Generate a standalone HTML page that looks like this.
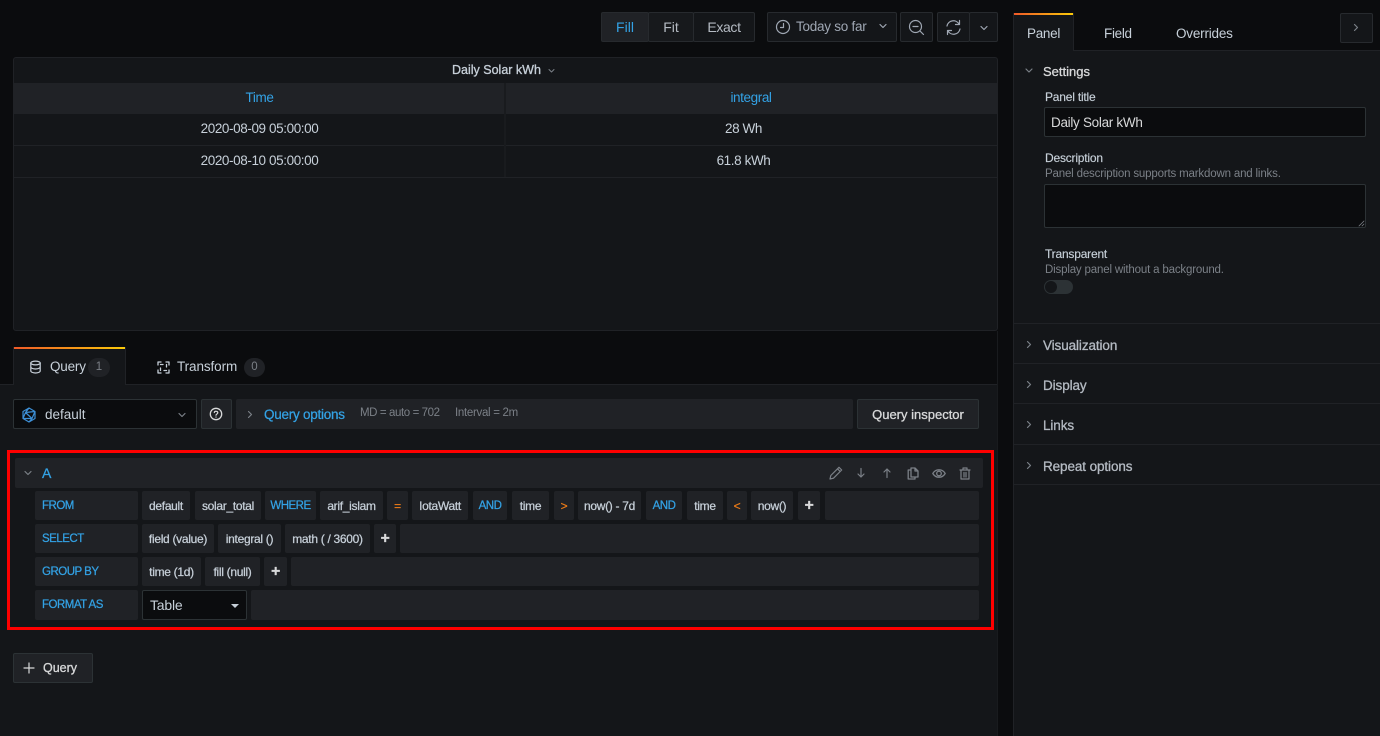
<!DOCTYPE html>
<html><head><meta charset="utf-8"><style>
html,body{margin:0;padding:0;width:1380px;height:736px;overflow:hidden;background:#0b0c0e}
body{position:relative;font-family:"Liberation Sans",sans-serif;color:#c7d0d9;font-size:14px}
.a{position:absolute;box-sizing:border-box;white-space:nowrap}
.t{font-size:13.5px;letter-spacing:-.4px}
.c{position:absolute;box-sizing:border-box;white-space:nowrap;text-align:center;background:#202226;border-radius:2px;color:#c7d0d9;font-size:12px;letter-spacing:-.3px;height:29px;line-height:30px;-webkit-text-stroke:.25px}
.k{color:#33a2e5;text-align:left;padding-left:7px;font-size:11.5px;letter-spacing:-.5px;line-height:31px}
.b{font-size:11.5px;letter-spacing:-.5px;line-height:31px}
.btn{position:absolute;box-sizing:border-box;background:#141619;border:1px solid #272a2e;height:30px;top:12px;border-radius:2px;text-align:center;line-height:28px;color:#9fa7b3}
svg{position:absolute;fill:none;stroke:#9fa7b3;stroke-width:1.5;stroke-linecap:round;stroke-linejoin:round}
.grad{position:absolute;height:2px;background:linear-gradient(90deg,#f05a28,#fbca0a)}
.sec{position:absolute;left:1014px;width:366px;height:40px;border-bottom:1px solid #202226;color:#b4bac2;font-size:13.5px;letter-spacing:-.1px;line-height:43px;padding-left:29px;box-sizing:border-box;-webkit-text-stroke:.3px}
.lab{position:absolute;font-size:12px;color:#c7d0d9;letter-spacing:-.2px;-webkit-text-stroke:.15px}
.hint{position:absolute;font-size:11.5px;letter-spacing:-.17px;color:#7b8087}
</style></head><body>

<!-- toolbar -->
<div class="btn" style="left:601px;width:48px;background:#202226;color:#33a2e5;line-height:29px">Fill</div>
<div class="btn" style="left:648px;width:46px;background:#17191c;color:#b4bac2;line-height:29px">Fit</div>
<div class="btn" style="left:693px;width:62px;color:#b4bac2;letter-spacing:-.35px;line-height:29px">Exact</div>
<div class="btn" style="left:767px;width:130px;text-align:left;padding-left:28px;font-size:13.5px;letter-spacing:-.25px;line-height:27px">Today so far</div>
<svg style="left:775px;top:19px" width="16" height="16" viewBox="0 0 16 16"><circle cx="8" cy="8" r="6.5" stroke-width="1.2"/><path d="M8.5 4.5V8.5H5.5" stroke-width="1.2"/></svg>
<svg style="left:878px;top:22px" width="10" height="8" viewBox="0 0 10 8"><path d="M2 2.5L5 5.5L8 2.5" stroke-width="1.2"/></svg>
<div class="btn" style="left:900px;width:33px"></div>
<svg style="left:908px;top:19px" width="17" height="17" viewBox="0 0 17 17"><circle cx="7.5" cy="7.5" r="6" stroke-width="1.2"/><path d="M5 7.5H10M12 12L15.5 15.5" stroke-width="1.2"/></svg>
<div class="btn" style="left:937px;width:33px"></div>
<svg style="left:945px;top:19px" width="17" height="17" viewBox="0 0 17 17"><path d="M2 7A6.5 6.5 0 0 1 14 5M15 10A6.5 6.5 0 0 1 3 12M14.5 1.5V5.5H10.5M2.5 15.5V11.5H6.5" stroke-width="1.2"/></svg>
<div class="btn" style="left:969px;width:29px"></div>
<svg style="left:979px;top:24px" width="10" height="8" viewBox="0 0 10 8"><path d="M2 2.5L5 5.5L8 2.5" stroke-width="1.2"/></svg>

<!-- panel -->
<div class="a" style="left:13px;top:57px;width:985px;height:274px;background:#141619;border:1px solid #202226;border-radius:3px"></div>
<div class="a" style="left:452px;top:63px;font-size:12.5px;color:#c7d0d9;line-height:15px;letter-spacing:0;-webkit-text-stroke:.3px">Daily Solar kWh</div>
<svg style="left:547px;top:67px" width="9" height="8" viewBox="0 0 9 8"><path d="M2 2.5L4.5 5L7 2.5" stroke-width="1" stroke="#7b8087"/></svg>
<div class="a" style="left:14px;top:83px;width:983px;height:31px;background:#202226"></div>
<div class="a t" style="left:14px;top:83px;width:491px;height:31px;line-height:30px;text-align:center;color:#33a2e5">Time</div>
<div class="a t" style="left:505px;top:83px;width:492px;height:31px;line-height:30px;text-align:center;color:#33a2e5">integral</div>
<div class="a t" style="left:14px;top:114px;width:491px;height:31px;line-height:30px;text-align:center">2020-08-09 05:00:00</div>
<div class="a t" style="left:505px;top:114px;width:477px;height:31px;line-height:30px;text-align:center">28 Wh</div>
<div class="a t" style="left:14px;top:146px;width:491px;height:31px;line-height:30px;text-align:center">2020-08-10 05:00:00</div>
<div class="a t" style="left:505px;top:146px;width:477px;height:31px;line-height:30px;text-align:center">61.8 kWh</div>
<div class="a" style="left:14px;top:145px;width:983px;height:1px;background:#202226"></div>
<div class="a" style="left:14px;top:177px;width:983px;height:1px;background:#202226"></div>
<div class="a" style="left:504px;top:83px;width:2px;height:94px;background:#191b1e"></div>

<!-- query area -->
<div class="a" style="left:0;top:384px;width:997px;height:352px;background:#141619;border-top:1px solid #202226"></div>
<div class="a" style="left:997px;top:331px;width:1px;height:405px;background:#191b1e"></div>
<div class="a" style="left:13px;top:347px;width:113px;height:38px;background:#141619;border-left:1px solid #202226;border-right:1px solid #202226"></div>
<div class="grad" style="left:14px;top:347px;width:111px"></div>
<svg style="left:29px;top:360px" width="13" height="14" viewBox="0 0 13 14"><ellipse cx="6.5" cy="3" rx="4.7" ry="1.9" stroke="#c7d0d9" stroke-width="1.2"/><path d="M1.8 3V11C1.8 12 4 13 6.5 13S11.2 12 11.2 11V3M1.8 7C1.8 8 4 9 6.5 9S11.2 8 11.2 7" stroke="#c7d0d9" stroke-width="1.2"/></svg>
<div class="a" style="left:50px;top:359px;line-height:16px;color:#c7d0d9;font-size:13.5px;letter-spacing:-.2px">Query</div>
<div class="a" style="left:88px;top:358px;width:22px;height:19px;border-radius:10px;background:#202226;text-align:center;line-height:19px;font-size:11.5px;color:#7b8087">1</div>
<svg style="left:157px;top:361px" width="13" height="13" viewBox="0 0 13 13"><path d="M1 4V1H4M9 1H12V4M12 9V12H9M4 12H1V9M3.5 3.5H6M9.5 3.5V6M9.5 9.5H7M3.5 9.5V7" stroke="#c7d0d9" stroke-width="1.3"/></svg>
<div class="a" style="left:177px;top:359px;line-height:16px;color:#c7d0d9;font-size:13.5px;letter-spacing:-.1px">Transform</div>
<div class="a" style="left:244px;top:358px;width:21px;height:19px;border-radius:10px;background:#202226;text-align:center;line-height:19px;font-size:11.5px;color:#7b8087">0</div>

<div class="a" style="left:13px;top:399px;width:184px;height:30px;background:#0b0c0e;border:1px solid #2c3235;border-radius:2px;padding-left:31px;line-height:29px;color:#c7d0d9;font-size:13.5px">default</div>
<svg style="left:21px;top:407px;" width="16" height="16" viewBox="0 0 16 16"><path d="M8 1L14 4.5V11.5L8 15L2 11.5V4.5ZM8 1L4.5 5.5L2 11.5L11 11.5L14 4.5L4.5 5.5L11 11.5L8 15" stroke="#3d8fd6" stroke-width="1.2"/></svg>
<svg style="left:177px;top:411px" width="10" height="8" viewBox="0 0 10 8"><path d="M2 2.5L5 5.5L8 2.5" stroke-width="1.2" stroke="#7b8087"/></svg>
<div class="a" style="left:201px;top:399px;width:31px;height:30px;background:#202226;border:1px solid #2c3235;border-radius:2px"></div>
<svg style="left:209px;top:407px" width="14" height="14" viewBox="0 0 14 14"><circle cx="7" cy="7" r="5.7" stroke="#d8d9da" stroke-width="1.3"/><path d="M5.3 5.5C5.5 3.8 8.8 3.9 8.8 5.7C8.8 7 7 6.9 7 8.2M7 10V10.1" stroke="#d8d9da" stroke-width="1.2"/></svg>
<div class="a" style="left:236px;top:399px;width:617px;height:30px;background:#202226;border-radius:2px"></div>
<svg style="left:246px;top:410px" width="8" height="9" viewBox="0 0 8 9"><path d="M2.5 1.5L5.5 4.5L2.5 7.5" stroke-width="1.2" stroke="#7b8087"/></svg>
<div class="a" style="left:264px;top:407px;line-height:16px;color:#33a2e5;font-size:13.5px;letter-spacing:-.25px;-webkit-text-stroke:.25px">Query options</div>
<div class="a" style="left:360px;top:406px;line-height:15px;font-size:11.5px;letter-spacing:-.4px;color:#7b8087">MD = auto = 702</div>
<div class="a" style="left:455px;top:406px;line-height:15px;font-size:11.5px;letter-spacing:-.3px;color:#7b8087">Interval = 2m</div>
<div class="a" style="left:857px;top:399px;width:122px;height:30px;background:#202226;border:1px solid #2c3235;border-radius:2px;text-align:center;line-height:29px;font-size:13px;color:#d8d9da;-webkit-text-stroke:.3px">Query inspector</div>

<!-- Query row -->
<div class="a" style="left:15px;top:458px;width:968px;height:30px;background:#202226;border-radius:2px"></div>
<svg style="left:23px;top:469px" width="10" height="8" viewBox="0 0 10 8"><path d="M2 2.5L5 5.5L8 2.5" stroke-width="1.2" stroke="#7b8087"/></svg>
<div class="a" style="left:42px;top:465px;font-size:14px;line-height:16px;color:#33a2e5;-webkit-text-stroke:.3px">A</div>
<svg style="left:829px;top:466px" width="14" height="14" viewBox="0 0 14 14"><path d="M1 13L1.8 9.5L10 1.3L12.7 4L4.5 12.2ZM8.5 2.8L11.2 5.5" stroke="#7b8087" stroke-width="1.2"/></svg>
<svg style="left:856px;top:467px" width="10" height="12" viewBox="0 0 10 12"><path d="M5 1.5V10M2 7L5 10L8 7" stroke="#7b8087" stroke-width="1.2"/></svg>
<svg style="left:882px;top:467px" width="10" height="12" viewBox="0 0 10 12"><path d="M5 10.5V2M2 5L5 2L8 5" stroke="#7b8087" stroke-width="1.2"/></svg>
<svg style="left:907px;top:467px" width="12" height="13" viewBox="0 0 12 13"><path d="M4 1H8L11 4V10H4ZM8 1V4H11M4 3H1.2V12H8V10" stroke="#7b8087" stroke-width="1.3"/></svg>
<svg style="left:932px;top:467px" width="14" height="13" viewBox="0 0 14 13"><path d="M.8 6.5C3.7 1.5 10.3 1.5 13.2 6.5C10.3 11.5 3.7 11.5 .8 6.5Z" stroke="#7b8087" stroke-width="1.3"/><circle cx="7" cy="6.5" r="2.3" stroke="#7b8087" stroke-width="1.3"/></svg>
<svg style="left:959px;top:467px" width="12" height="13" viewBox="0 0 12 13"><path d="M1 3H11M4 3V1H8V3M2 3V12H10V3M5 5.5V10M7 5.5V10" stroke="#7b8087" stroke-width="1.2"/></svg>

<!-- Row 1 -->
<div class="c k" style="left:35px;top:491px;width:103px">FROM</div>
<div class="c" style="left:142px;top:491px;width:48px">default</div>
<div class="c" style="left:195px;top:491px;width:66px">solar_total</div>
<div class="c b" style="left:265px;top:491px;width:51px;color:#33a2e5">WHERE</div>
<div class="c" style="left:320px;top:491px;width:63px">arif_islam</div>
<div class="c" style="left:387px;top:491px;width:21px;color:#eb7b18">=</div>
<div class="c" style="left:412px;top:491px;width:56px">IotaWatt</div>
<div class="c b" style="left:473px;top:491px;width:34px;color:#33a2e5">AND</div>
<div class="c" style="left:512px;top:491px;width:37px">time</div>
<div class="c" style="left:554px;top:491px;width:20px;color:#eb7b18">&gt;</div>
<div class="c" style="left:578px;top:491px;width:63px">now() - 7d</div>
<div class="c b" style="left:646px;top:491px;width:36px;color:#33a2e5">AND</div>
<div class="c" style="left:687px;top:491px;width:36px">time</div>
<div class="c" style="left:727px;top:491px;width:20px;color:#eb7b18">&lt;</div>
<div class="c" style="left:751px;top:491px;width:42px">now()</div>
<div class="c" style="left:798px;top:491px;width:22px;font-size:16px;font-weight:bold;line-height:29px;color:#d8d9da">+</div>
<div class="c" style="left:825px;top:491px;width:154px"></div>
<!-- Row 2 -->
<div class="c k" style="left:35px;top:524px;width:103px;line-height:30px">SELECT</div>
<div class="c" style="left:142px;top:524px;width:72px;line-height:31px">field (value)</div>
<div class="c" style="left:218px;top:524px;width:63px;line-height:31px">integral ()</div>
<div class="c" style="left:285px;top:524px;width:85px;line-height:31px">math ( / 3600)</div>
<div class="c" style="left:374px;top:524px;width:22px;font-size:16px;font-weight:bold;line-height:29px;color:#d8d9da">+</div>
<div class="c" style="left:400px;top:524px;width:579px"></div>
<!-- Row 3 -->
<div class="c k" style="left:35px;top:557px;width:103px;line-height:30px">GROUP BY</div>
<div class="c" style="left:142px;top:557px;width:59px;line-height:31px">time (1d)</div>
<div class="c" style="left:205px;top:557px;width:55px;line-height:31px">fill (null)</div>
<div class="c" style="left:264px;top:557px;width:23px;font-size:16px;font-weight:bold;line-height:29px;color:#d8d9da">+</div>
<div class="c" style="left:291px;top:557px;width:688px"></div>
<!-- Row 4 -->
<div class="c k" style="left:35px;top:590px;width:103px;height:30px;line-height:31px">FORMAT AS</div>
<div class="a" style="left:142px;top:590px;width:105px;height:30px;background:#0b0c0e;border:1px solid #2c3235;border-radius:2px;padding-left:7px;line-height:28px;color:#c7d0d9;letter-spacing:-.2px">Table</div>
<div class="a" style="left:231px;top:604px;width:0;height:0;border-left:4px solid transparent;border-right:4px solid transparent;border-top:4px solid #c7d0d9"></div>
<div class="c" style="left:251px;top:590px;width:728px;height:30px"></div>

<!-- Red box -->
<div class="a" style="left:7px;top:450px;width:987px;height:180px;border:3px solid #f00"></div>

<!-- add query -->
<div class="a" style="left:13px;top:653px;width:80px;height:30px;background:#202226;border:1px solid #2c3235;border-radius:2px;padding-left:29px;line-height:29px;font-size:12.5px;color:#d8d9da;-webkit-text-stroke:.3px">Query</div>
<svg style="left:23px;top:662px" width="12" height="12" viewBox="0 0 12 12"><path d="M6 1V11M1 6H11" stroke="#d8d9da" stroke-width="1.2"/></svg>

<!-- right sidebar -->
<div class="a" style="left:1013px;top:50px;width:367px;height:686px;background:#141619;border-left:1px solid #202226;border-top:1px solid #202226"></div>
<div class="a" style="left:1013px;top:13px;width:61px;height:38px;background:#141619;border-left:1px solid #202226;border-right:1px solid #202226"></div>
<div class="grad" style="left:1014px;top:13px;width:59px"></div>
<div class="a" style="left:1027px;top:26px;line-height:16px;color:#c7d0d9;font-size:13.5px;letter-spacing:-.3px">Panel</div>
<div class="a" style="left:1104px;top:26px;line-height:16px;color:#c7d0d9;font-size:13.5px;letter-spacing:-.3px">Field</div>
<div class="a" style="left:1176px;top:26px;line-height:16px;color:#c7d0d9;font-size:13.5px;letter-spacing:-.2px">Overrides</div>
<div class="a" style="left:1340px;top:13px;width:33px;height:30px;background:#141619;border:1px solid #272a2e;border-radius:2px"></div>
<svg style="left:1352px;top:23px" width="8" height="9" viewBox="0 0 8 9"><path d="M2.5 1.5L5.5 4.5L2.5 7.5" stroke-width="1.2" stroke="#7b8087"/></svg>

<svg style="left:1024px;top:67px" width="10" height="8" viewBox="0 0 10 8"><path d="M2 2L5 5L8 2" stroke-width="1.2" stroke="#7b8087"/></svg>
<div class="a" style="left:1043px;top:64px;line-height:16px;color:#d8d9da;font-size:13px;-webkit-text-stroke:.3px">Settings</div>
<div class="lab" style="left:1045px;top:90px;line-height:14px">Panel title</div>
<div class="a" style="left:1044px;top:107px;width:322px;height:30px;background:#0b0c0e;border:1px solid #2c3235;border-radius:2px;padding-left:6px;line-height:29px;color:#d8d9da;font-size:13.5px;letter-spacing:-.3px">Daily Solar kWh</div>
<div class="lab" style="left:1045px;top:151px;line-height:14px">Description</div>
<div class="hint" style="left:1045px;top:167px;line-height:14px">Panel description supports markdown and links.</div>
<div class="a" style="left:1044px;top:184px;width:322px;height:44px;background:#0b0c0e;border:1px solid #2c3235;border-radius:2px"></div>
<svg style="left:1358px;top:220px" width="7" height="7" viewBox="0 0 7 7"><path d="M6 1L1 6M6 4L4 6" stroke="#7b8087" stroke-width=".8"/></svg>
<div class="lab" style="left:1045px;top:247px;line-height:14px">Transparent</div>
<div class="hint" style="left:1045px;top:263px;line-height:14px">Display panel without a background.</div>
<div class="a" style="left:1044px;top:280px;width:29px;height:14px;border-radius:7px;background:#2c3235"></div>
<div class="a" style="left:1045px;top:281px;width:12px;height:12px;border-radius:6px;background:#141619"></div>

<div class="a" style="left:1014px;top:323px;width:366px;height:1px;background:#202226"></div>
<div class="sec" style="top:324px">Visualization</div>
<div class="sec" style="top:364px;height:40px">Display</div>
<div class="sec" style="top:404px;height:41px">Links</div>
<div class="sec" style="top:445px">Repeat options</div>
<svg style="left:1025px;top:340px" width="8" height="9" viewBox="0 0 8 9"><path d="M2.5 1.5L5.5 4.5L2.5 7.5" stroke-width="1.2" stroke="#7b8087"/></svg>
<svg style="left:1025px;top:380px" width="8" height="9" viewBox="0 0 8 9"><path d="M2.5 1.5L5.5 4.5L2.5 7.5" stroke-width="1.2" stroke="#7b8087"/></svg>
<svg style="left:1025px;top:420px" width="8" height="9" viewBox="0 0 8 9"><path d="M2.5 1.5L5.5 4.5L2.5 7.5" stroke-width="1.2" stroke="#7b8087"/></svg>
<svg style="left:1025px;top:461px" width="8" height="9" viewBox="0 0 8 9"><path d="M2.5 1.5L5.5 4.5L2.5 7.5" stroke-width="1.2" stroke="#7b8087"/></svg>
</body></html>
